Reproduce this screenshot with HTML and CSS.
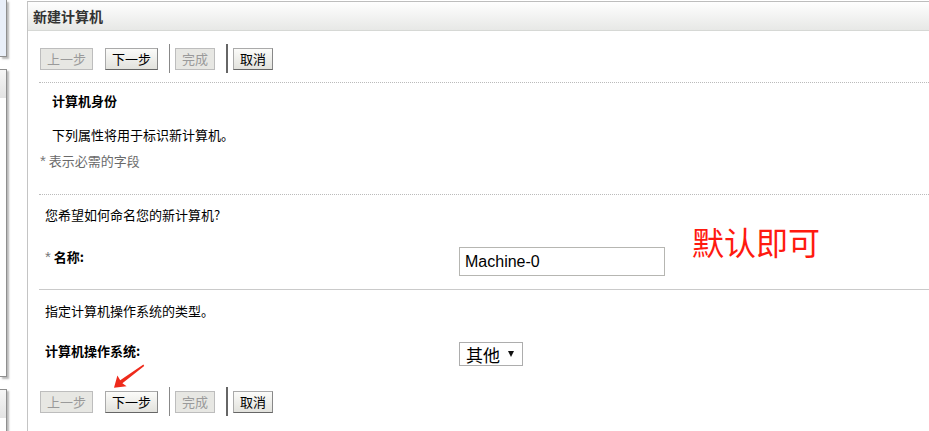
FILE: index.html
```html
<!DOCTYPE html>
<html lang="zh-CN">
<head>
<meta charset="utf-8">
<title>新建计算机</title>
<link rel="stylesheet" href="styles.css">
</head>
<body>
<div class="page">
  <aside class="sidebar">
    <div class="sb-panel sb-panel-1"></div>
    <div class="sb-panel sb-panel-2"><div class="sb-head"></div></div>
    <div class="sb-panel sb-panel-3"><div class="sb-head"></div></div>
  </aside>

  <main class="main">
    <div class="header">新建计算机</div>
    <div class="content">
      <div class="toolbar">
        <button class="btn btn-disabled btn-first">上一步</button>
        <button class="btn btn-next">下一步</button>
        <span class="sep sep-thin"></span>
        <button class="btn btn-disabled">完成</button>
        <span class="sep sep-thick"></span>
        <button class="btn">取消</button>
      </div>

      <section class="sec sec-intro">
        <div class="sec-title">计算机身份</div>
        <div class="sec-desc">下列属性将用于标识新计算机。</div>
        <div class="req-note"><span class="star">*</span> 表示必需的字段</div>
      </section>

      <section class="sec sec-name">
        <div class="q">您希望如何命名您的新计算机?</div>
        <div class="form-row">
          <label class="field-label"><span class="star">*</span> <b>名称:</b></label>
          <div class="field"><input class="text-input" type="text" value="Machine-0"></div>
        </div>
      </section>

      <section class="sec sec-os">
        <div class="q">指定计算机操作系统的类型。</div>
        <div class="form-row form-row-os">
          <label class="field-label"><b>计算机操作系统:</b></label>
          <div class="field"><div class="select"><span class="select-text">其他</span><i class="caret"></i></div></div>
        </div>
      </section>

      <div class="toolbar toolbar-bottom">
        <button class="btn btn-disabled btn-first">上一步</button>
        <button class="btn btn-next">下一步</button>
        <span class="sep sep-thin"></span>
        <button class="btn btn-disabled">完成</button>
        <span class="sep sep-thick"></span>
        <button class="btn">取消</button>
      </div>
    </div>
  </main>

  <div class="note">默认即可</div>
  <svg class="arrow" width="40" height="30" viewBox="110 362 40 30" xmlns="http://www.w3.org/2000/svg">
    <polygon points="114,387.8 117.4,375.6 120.2,380.2 143.4,364.6 144.2,366 122.4,383.2 126.6,386.2" fill="#ee2a1b"/>
  </svg>
</div>
</body>
</html>
```

FILE: styles.css
```css
* { box-sizing: border-box; }

html, body {
  margin: 0;
  padding: 0;
  background: #fff;
}

body {
  width: 929px;
  height: 431px;
  overflow: hidden;
  font-family: "Noto Sans CJK SC", "Noto Sans", sans-serif;
  font-size: 13px;
  color: #111;
}

.page {
  position: relative;
  display: flex;
  height: 431px;
}

/* ---------- left strip ---------- */
.sidebar {
  width: 27px;
  flex: none;
  display: flex;
  flex-direction: column;
  gap: 12px;
  overflow: hidden;
}

.sb-panel {
  flex: none;
  width: 7px;
  background: #fff;
  border: 1px solid #8f8f8f;
  border-left: none;
  box-shadow: 2px 2px 2px rgba(0, 0, 0, 0.28);
}

.sb-panel-1 {
  height: 57px;
  border-top: none;
  background: #e9eff9;
}

.sb-panel-2 {
  height: 308px;
}

.sb-panel-3 {
  height: 60px;
}

.sb-head {
  height: 28px;
  background: linear-gradient(#f6f6f6, #e3e3e3);
}

/* ---------- main window ---------- */
.main {
  flex: 1;
  min-width: 0;
  margin-top: 1px;
  border-top: 1px solid #bdbdbd;
  border-left: 1px solid #c4c4c4;
}

.header {
  height: 29px;
  padding-left: 5px;
  line-height: 28px;
  font-size: 14px;
  font-weight: bold;
  color: #333;
  background: linear-gradient(#fefefe, #e7e8e6);
  border-bottom: 1px solid #d6d8d5;
}

.content {
  padding-left: 11px;
}

/* ---------- toolbar ---------- */
.toolbar {
  display: flex;
  align-items: center;
  height: 29px;
  margin-top: 13px;
  margin-bottom: 9px;
}

.toolbar-bottom {
  margin-top: 8px;
  margin-bottom: 0;
}

.btn {
  height: 22px;
  padding: 0 6px;
  margin: 0;
  font-family: inherit;
  font-size: 13px;
  line-height: 20px;
  color: #000;
  background: linear-gradient(#fbfbf9, #e2e2dd);
  border: 1px solid #aaa;
  border-right-color: #888;
  border-bottom-color: #666;
  border-radius: 0;
}

.btn-first { margin-left: 1px; }
.btn-next { margin-left: 12px; }

.btn-disabled {
  color: #9a9a9a;
  background: #e7e7e3;
  border-color: #bdbdbd;
}

.sep {
  align-self: stretch;
  background: #888;
}

.sep-thin {
  width: 1px;
  margin: 0 5px 0 11px;
}

.sep-thick {
  width: 2px;
  background: #666;
  margin: 0 5px 0 11px;
}

/* ---------- sections ---------- */
.sec {
  border-top: 1px dotted #bbb;
}

.sec-intro {
  padding: 8px 0 23px 0;
}

.sec-title {
  padding-left: 13px;
  line-height: 20px;
  font-weight: bold;
  color: #000;
}

.sec-desc {
  padding-left: 13px;
  margin-top: 14px;
  line-height: 20px;
  color: #000;
}

.req-note {
  padding-left: 1px;
  margin-top: 6px;
  line-height: 20px;
  color: #6a6a6a;
}

.star {
  font-family: "Liberation Sans", Arial, sans-serif;
  font-size: 15px;
  color: #777;
}

.q {
  padding-left: 6px;
  line-height: 20px;
  color: #000;
}

.sec-name {
  padding: 10px 0 13px 0;
}

.sec-os {
  border-top: 1px solid #cacaca;
  padding: 11px 0 13px 0;
}

.form-row {
  display: grid;
  grid-template-columns: 414px 1fr;
  align-items: start;
  padding-left: 6px;
  margin-top: 22px;
}

.form-row-os {
  margin-top: 20px;
}

.field-label {
  line-height: 20px;
  color: #000;
}

.field-label b { font-weight: bold; }

.text-input {
  display: block;
  width: 206px;
  height: 29px;
  margin: 0;
  padding: 0 0 0 5px;
  font-family: "Liberation Sans", Arial, sans-serif;
  font-size: 16px;
  color: #000;
  border: 1px solid #b6b6b2;
  background: #fff;
  outline: none;
}

.select {
  display: flex;
  align-items: center;
  width: 64px;
  height: 24px;
  margin-top: 1px;
  padding: 0 0 0 6px;
  border: 1px solid #adadad;
  background: #fff;
  color: #000;
}

.select-text {
  font-size: 17px;
  line-height: 22px;
  margin-top: 1px;
}

.caret {
  display: block;
  width: 0;
  height: 0;
  margin: 0 0 0 8px;
  border-left: 3.5px solid transparent;
  border-right: 3.5px solid transparent;
  border-top: 6px solid #111;
}

/* ---------- annotations ---------- */
.note {
  position: absolute;
  left: 692px;
  top: 225px;
  font-size: 32px;
  line-height: 32px;
  color: #ff1a0f;
  white-space: nowrap;
}

.arrow {
  position: absolute;
  left: 110px;
  top: 362px;
}
```
